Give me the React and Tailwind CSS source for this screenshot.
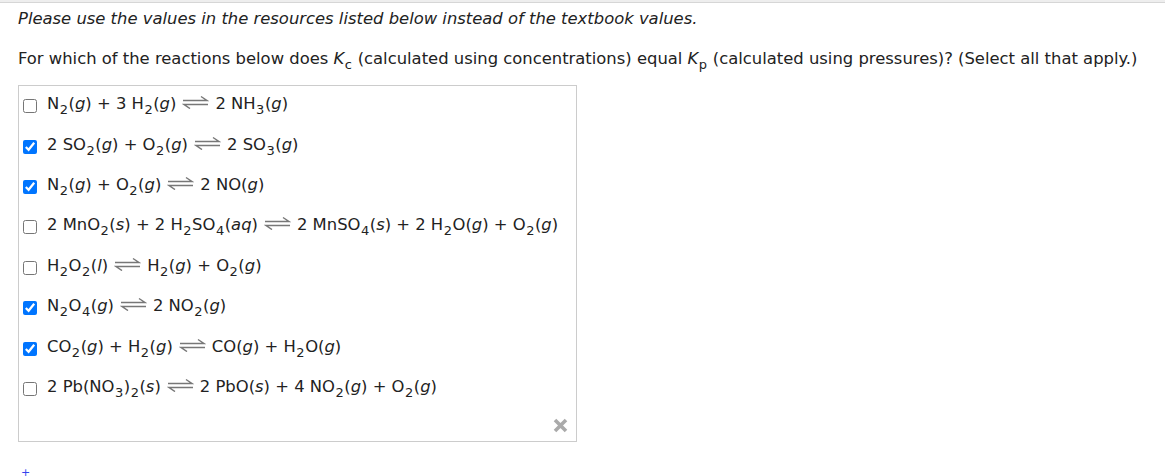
import { useState } from "react";

function Arrow() {
  return (
    <svg width="27" height="14" viewBox="0 0 27 14" className="inline-block mx-[6px] align-[0px]">
      <path d="M1 5.5 H25 L19 1.5" fill="none" stroke="#777" strokeWidth="1.5" />
      <path d="M26 9.5 H2 L8 13.5" fill="none" stroke="#777" strokeWidth="1.5" />
    </svg>
  );
}

const S = ({ children }) => <sub className="text-[13px] relative top-[5px] bottom-auto align-baseline mx-[0.5px]">{children}</sub>;
const I = ({ children }) => <i>{children}</i>;

const reactions = [
  { checked: false, body: <>N<S>2</S>(<I>g</I>) + 3 H<S>2</S>(<I>g</I>)<Arrow />2 NH<S>3</S>(<I>g</I>)</> },
  { checked: true, body: <>2 SO<S>2</S>(<I>g</I>) + O<S>2</S>(<I>g</I>)<Arrow />2 SO<S>3</S>(<I>g</I>)</> },
  { checked: true, body: <>N<S>2</S>(<I>g</I>) + O<S>2</S>(<I>g</I>)<Arrow />2 NO(<I>g</I>)</> },
  { checked: false, body: <>2 MnO<S>2</S>(<I>s</I>) + 2 H<S>2</S>SO<S>4</S>(<I>aq</I>)<Arrow />2 MnSO<S>4</S>(<I>s</I>) + 2 H<S>2</S>O(<I>g</I>) + O<S>2</S>(<I>g</I>)</> },
  { checked: false, body: <>H<S>2</S>O<S>2</S>(<I>l</I>)<Arrow />H<S>2</S>(<I>g</I>) + O<S>2</S>(<I>g</I>)</> },
  { checked: true, body: <>N<S>2</S>O<S>4</S>(<I>g</I>)<Arrow />2 NO<S>2</S>(<I>g</I>)</> },
  { checked: true, body: <>CO<S>2</S>(<I>g</I>) + H<S>2</S>(<I>g</I>)<Arrow />CO(<I>g</I>) + H<S>2</S>O(<I>g</I>)</> },
  { checked: false, body: <>2 Pb(NO<S>3</S>)<S>2</S>(<I>s</I>)<Arrow />2 PbO(<I>s</I>) + 4 NO<S>2</S>(<I>g</I>) + O<S>2</S>(<I>g</I>)</> },
];

export default function App() {
  const [checks, setChecks] = useState(reactions.map((r) => r.checked));

  return (
    <div className="w-[1165px] h-[476px] overflow-hidden bg-white text-[#222] text-[16.4px]" style={{ fontFamily: '"DejaVu Sans", Verdana, sans-serif' }}>
      <div className="h-[2px] bg-[#eee]" />
      <div className="h-[1px] bg-[#d6d6d6]" />

      <div className="pl-[18px] pt-[6px]">
        <p className="italic leading-[20px]">Please use the values in the resources listed below instead of the textbook values.</p>

        <p className="mt-[20px] leading-[20px]">
          For which of the reactions below does <i>K</i><S>c</S> (calculated using concentrations) equal <i>K</i><S>p</S> (calculated using pressures)? (Select all that apply.)
        </p>

        <div className="mt-[16px] w-[559px] h-[357px] border border-[#ccc] pl-[4px] relative">
          {reactions.map((r, i) => (
            <label key={i} className="flex items-center h-[40.4px]">
              <input
                type="checkbox"
                checked={checks[i]}
                onChange={() => setChecks(checks.map((c, j) => (j === i ? !c : c)))}
                className="w-[14px] h-[14px] m-0 mr-[10px] accent-[#0075ff]"
              />
              <span className="whitespace-nowrap leading-[20px] relative top-[-2px]">{r.body}</span>
            </label>
          ))}
          <svg width="15" height="15" viewBox="0 0 15 15" className="absolute right-[8px] bottom-[8px]">
            <path d="M2 2 L13 13 M13 2 L2 13" stroke="#aaa" strokeWidth="3.6" />
          </svg>
        </div>

        <div className="mt-[25px] ml-[3px] text-[#3344ee] text-[11px] leading-none">+</div>
      </div>
    </div>
  );
}
